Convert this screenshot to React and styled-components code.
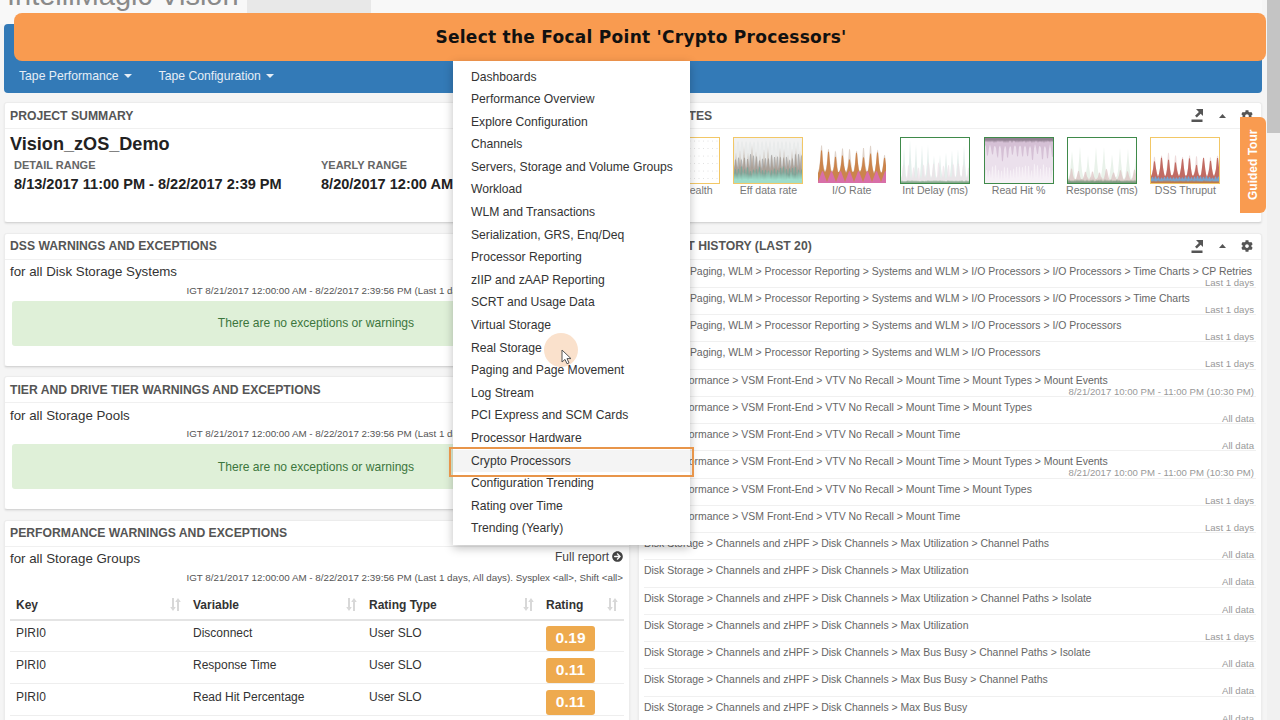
import styled, { createGlobalStyle } from "styled-components";
import { FaCog, FaArrowCircleRight } from "react-icons/fa";

const GlobalStyle = createGlobalStyle`
  html, body {
    margin: 0;
    height: 100%;
    overflow: hidden;
    background: #f5f5f5;
    font-family: "Liberation Sans", Arial, sans-serif;
  }
  * { box-sizing: border-box; }
`;

const Screen = styled.div`
  position: relative;
  width: 1280px;
  height: 720px;
  overflow: hidden;
  display: flex;
`;

const Page = styled.div`
  width: 1267px;
  height: 720px;
  overflow: hidden;
  padding-right: 5px;
`;

const Scrollbar = styled.div`
  width: 13px;
  height: 720px;
  background: #f1f1f1;
`;

const ScrollThumb = styled.div`
  height: 133px;
  background: #c4c4c4;
`;

const Header = styled.header`
  height: 24px;
  overflow: hidden;
  display: flex;
  background: #f8f8f8;
`;

const Brand = styled.div`
  width: 247px;
  padding-left: 7px;
  margin-top: -21px;
  font-size: 29px;
  line-height: 32px;
  color: #8a8a8a;
  white-space: nowrap;
`;

const HeaderTab = styled.div`
  width: 124px;
  height: 13px;
  background: #e8e8e8;
`;

const NavBar = styled.nav`
  height: 69px;
  margin-left: 4px;
  padding: 0 0 8px 15px;
  background: #337ab7;
  border-radius: 4px;
  display: flex;
  align-items: flex-end;
  gap: 27px;
`;

const NavItem = styled.span`
  font-size: 12.2px;
  line-height: 18px;
  color: #e6eef6;
  display: flex;
  align-items: center;
  gap: 5px;
  &::after {
    content: "";
    border-top: 4px solid #e6eef6;
    border-left: 4px solid transparent;
    border-right: 4px solid transparent;
  }
`;

const Columns = styled.div`
  display: grid;
  grid-template-columns: 626px 624px;
  gap: 8px;
  margin: 9px 0 0 4px;
`;

const Column = styled.div`
  display: flex;
  flex-direction: column;
  gap: 9.5px;
`;

const Panel = styled.section`
  height: ${(p) => p.$height}px;
  flex: none;
  background: #fff;
  border: 1px solid #ececec;
  border-bottom: 1px solid #d6d6d6;
  border-radius: 3px;
  box-shadow: 0 1px 2px rgba(0, 0, 0, 0.08);
  overflow: hidden;
`;

const PanelHead = styled.div`
  height: 26px;
  padding: 0 6px 0 5px;
  border-bottom: 1px solid #f0f0f0;
  display: flex;
  align-items: center;
  justify-content: space-between;
  color: #555;
`;

const PanelTitle = styled.h3`
  margin: 0;
  font-size: 12.2px;
  font-weight: 700;
  color: #555;
  white-space: nowrap;
`;

const HeadIcons = styled.div`
  display: flex;
  align-items: center;
  gap: 15px;
  padding-right: 2px;
  color: #555;
  svg { display: block; }
`;

const ProjectName = styled.div`
  margin: 5px 0 0 5px;
  font-size: 18.1px;
  line-height: 20px;
  font-weight: 700;
  color: #222;
`;

const RangeRow = styled.div`
  display: flex;
  margin: 4px 0 0 9px;
`;

const RangeBlock = styled.div`
  width: 307px;
  flex: none;
  white-space: nowrap;
`;

const RangeLabel = styled.div`
  font-size: 11px;
  line-height: 14px;
  font-weight: 700;
  color: #666;
`;

const RangeValue = styled.div`
  margin-top: 3px;
  font-size: 14.55px;
  line-height: 18px;
  font-weight: 700;
  color: #222;
`;

const SubHead = styled.div`
  display: flex;
  justify-content: space-between;
  align-items: center;
  padding: 2px 6px 0 5px;
  height: 22px;
`;

const ForAll = styled.span`
  font-size: 13.3px;
  color: #333;
`;

const FullReport = styled.span`
  display: flex;
  align-items: center;
  gap: 3px;
  margin-bottom: 4px;
  font-size: 12px;
  color: #444;
`;

const Scope = styled.div`
  margin-top: 2px;
  padding-right: 6px;
  text-align: right;
  font-size: 9.8px;
  line-height: 14px;
  color: #555;
  white-space: nowrap;
`;

const Alert = styled.div`
  height: 45px;
  margin: 3px 9px 0 7px;
  border-radius: 3px;
  background: #dff0d8;
  color: #3c763d;
  font-size: 12.1px;
  display: flex;
  align-items: center;
  justify-content: center;
`;

const Table = styled.table`
  width: 614px;
  margin: 6px 0 0 5px;
  border-collapse: collapse;
  table-layout: fixed;
  font-size: 12px;
  color: #333;
`;

const Th = styled.th`
  width: ${(p) => p.$width}px;
  height: 29px;
  padding: 0 6px;
  text-align: left;
  font-weight: 700;
  border-bottom: 2px solid #e4e4e4;
`;

const ThInner = styled.div`
  display: flex;
  justify-content: space-between;
  align-items: center;
`;

const Td = styled.td`
  height: 32px;
  padding: 0 6px 6px;
  border-bottom: 1px solid #eee;
  vertical-align: middle;
`;

const RatingTd = styled(Td)`
  padding: 5px 6px 0;
`;

const Rating = styled.div`
  width: 49px;
  height: 25px;
  border-radius: 3px;
  background: #eeaa4e;
  color: #fff;
  font-size: 15.5px;
  font-weight: 700;
  display: flex;
  align-items: center;
  justify-content: center;
`;

const ThumbRow = styled.div`
  display: flex;
  gap: 13.4px;
  padding: 8px 0 0 11px;
`;

const Thumb = styled.figure`
  width: 70px;
  margin: 0;
  flex: none;
`;

const ThumbFrame = styled.div`
  width: 70px;
  height: 47px;
  border: 1px solid ${(p) => p.$border};
  overflow: hidden;
  svg { display: block; width: 100%; height: 100%; }
`;

const ThumbLabel = styled.figcaption`
  margin: 0 -10px;
  text-align: center;
  font-size: 10.6px;
  line-height: 12px;
  color: #777;
  white-space: nowrap;
`;

const HistoryList = styled.div`
  padding-top: 1px;
`;

const HistoryRow = styled.div`
  height: 27.27px;
  margin: 0 5px 0 5px;
  padding-top: 4px;
  border-bottom: 1px solid #f0f0f0;
`;

const HistoryPath = styled.div`
  font-size: 10.46px;
  line-height: 13px;
  color: #666;
  white-space: nowrap;
`;

const HistoryWhen = styled.div`
  margin-top: -1px;
  padding-right: 2px;
  text-align: right;
  font-size: 9.6px;
  line-height: 11px;
  color: #999;
  white-space: nowrap;
`;

const Banner = styled.div`
  position: absolute;
  left: 14px;
  top: 13px;
  width: 1252px;
  height: 48px;
  padding-left: 2px;
  border-radius: 8px;
  background: #f99b50;
  color: #111;
  font-family: "DejaVu Sans", sans-serif;
  font-size: 17px;
  font-weight: 700;
  display: flex;
  align-items: center;
  justify-content: center;
  letter-spacing: 0.27px;
`;

const Dropdown = styled.ul`
  position: absolute;
  left: 453px;
  top: 61px;
  width: 237px;
  height: 484px;
  margin: 0;
  padding: 4.5px 0 0;
  list-style: none;
  background: #fff;
  box-shadow: 0 3px 9px rgba(0, 0, 0, 0.25);
`;

const DropdownItem = styled.li`
  height: 22.6px;
  padding-left: 18px;
  font-size: 12.15px;
  line-height: 22.6px;
  color: #333;
  white-space: nowrap;
  background: ${(p) => (p.$active ? "#f4f4f4" : "transparent")};
`;

const Spotlight = styled.div`
  position: absolute;
  left: 449px;
  top: 447px;
  width: 245px;
  height: 30px;
  border: 2px solid #e8954a;
`;

const CursorHalo = styled.div`
  position: absolute;
  left: 544px;
  top: 333px;
  width: 34px;
  height: 34px;
  border-radius: 50%;
  background: rgba(247, 205, 170, 0.6);
`;

const CursorIcon = styled.svg`
  position: absolute;
  left: 561px;
  top: 349px;
`;

const GuidedTour = styled.div`
  position: absolute;
  left: 1240px;
  top: 117px;
  width: 26px;
  height: 96px;
  border-radius: 6px 0 0 6px;
  background: #f99b50;
  color: #fff;
  font-size: 12px;
  font-weight: 700;
  writing-mode: vertical-rl;
  transform: rotate(180deg);
  display: flex;
  align-items: center;
  justify-content: center;
`;

const dropdownItems = [
  "Dashboards",
  "Performance Overview",
  "Explore Configuration",
  "Channels",
  "Servers, Storage and Volume Groups",
  "Workload",
  "WLM and Transactions",
  "Serialization, GRS, Enq/Deq",
  "Processor Reporting",
  "zIIP and zAAP Reporting",
  "SCRT and Usage Data",
  "Virtual Storage",
  "Real Storage",
  "Paging and Page Movement",
  "Log Stream",
  "PCI Express and SCM Cards",
  "Processor Hardware",
  "Crypto Processors",
  "Configuration Trending",
  "Rating over Time",
  "Trending (Yearly)",
];

const wlm = "Systems, Paging, WLM > Processor Reporting > Systems and WLM > I/O Processors";
const vsm = "Tape Performance > VSM Front-End > VTV No Recall > Mount Time";
const disk = "Disk Storage > Channels and zHPF > Disk Channels";
const mountRange = "8/21/2017 10:00 PM - 11:00 PM (10:30 PM)";

const history = [
  [`${wlm} > I/O Processors > Time Charts > CP Retries`, "Last 1 days"],
  [`${wlm} > I/O Processors > Time Charts`, "Last 1 days"],
  [`${wlm} > I/O Processors`, "Last 1 days"],
  [wlm, "Last 1 days"],
  [`${vsm} > Mount Types > Mount Events`, mountRange],
  [`${vsm} > Mount Types`, "All data"],
  [vsm, "All data"],
  [`${vsm} > Mount Types > Mount Events`, mountRange],
  [`${vsm} > Mount Types`, "Last 1 days"],
  [vsm, "Last 1 days"],
  [`${disk} > Max Utilization > Channel Paths`, "All data"],
  [`${disk} > Max Utilization`, "All data"],
  [`${disk} > Max Utilization > Channel Paths > Isolate`, "All data"],
  [`${disk} > Max Utilization`, "Last 1 days"],
  [`${disk} > Max Bus Busy > Channel Paths > Isolate`, "All data"],
  [`${disk} > Max Bus Busy > Channel Paths`, "All data"],
  [`${disk} > Max Bus Busy`, "All data"],
];

const ratings = [
  ["PIRI0", "Disconnect", "User SLO", "0.19"],
  ["PIRI0", "Response Time", "User SLO", "0.11"],
  ["PIRI0", "Read Hit Percentage", "User SLO", "0.11"],
];

const scope = "IGT 8/21/2017 12:00:00 AM - 8/22/2017 2:39:56 PM (Last 1 days, All days). Sysplex <all>, Shift <all>";

const GREEN = "#3f8a4a";
const YELLOW = "#f2c766";

// base and amp are in chart px, period gives the spacing of the big spikes
const thumbs = [
  { label: "DSS Health", border: YELLOW, dots: true, layers: [] },
  {
    label: "Eff data rate",
    border: YELLOW,
    bg: "#e9ebeb",
    layers: [
      { color: "#8a8a8a", opacity: 0.6, base: 14, amp: 30, period: 3 },
      { color: "#a58c78", opacity: 0.45, base: 12, amp: 26, period: 4 },
      { color: "#5fa89a", opacity: 0.6, base: 6, amp: 22, period: 3 },
      { color: "#a5e6d2", opacity: 0.85, base: 3, amp: 9, period: 2 },
      { color: "#f4f4f4", opacity: 0.7, base: 2, amp: 16, period: 4, hang: true },
    ],
  },
  {
    label: "I/O Rate",
    border: "transparent",
    layers: [
      { color: "#c9b6a6", opacity: 0.6, base: 10, amp: 36, period: 7 },
      { color: "#c97f45", opacity: 0.95, base: 9, amp: 30, period: 7 },
      { color: "#d86fa8", opacity: 1, base: 1, amp: 12, period: 9, smooth: true },
    ],
  },
  {
    label: "Int Delay (ms)",
    border: GREEN,
    layers: [
      { color: "#d5e6e2", opacity: 0.65, base: 3, amp: 40, period: 6 },
      { color: "#ecdfe6", opacity: 0.65, base: 3, amp: 28, period: 5 },
      { color: "#6f9a78", opacity: 0.8, base: 1, amp: 2, period: 2 },
    ],
  },
  {
    label: "Read Hit %",
    border: GREEN,
    bg: "#ebe0ec",
    layers: [
      { color: "#f8f2f8", opacity: 0.85, base: 3, amp: 32, period: 3 },
      { color: "#c2a6c2", opacity: 0.55, base: 6, amp: 26, period: 5, hang: true },
      { color: "#8a7a8a", opacity: 0.9, base: 2, amp: 3, period: 2, hang: true },
    ],
  },
  {
    label: "Response (ms)",
    border: GREEN,
    layers: [
      { color: "#e2eee3", opacity: 0.75, base: 3, amp: 32, period: 8 },
      { color: "#dcc0c0", opacity: 0.7, base: 3, amp: 15, period: 7 },
      { color: "#6c8f72", opacity: 0.85, base: 1, amp: 3, period: 2 },
    ],
  },
  {
    label: "DSS Thruput",
    border: YELLOW,
    layers: [
      { color: "#ead2d2", opacity: 0.8, base: 5, amp: 36, period: 7 },
      { color: "#b8574e", opacity: 0.85, base: 6, amp: 26, period: 7 },
      { color: "#6fa8d8", opacity: 0.95, base: 3, amp: 8, period: 3 },
      { color: "#c8763c", opacity: 0.9, base: 1, amp: 2, period: 2 },
    ],
  },
];

const seededRandom = (seed) => () => {
  seed = (seed * 16807) % 2147483647;
  return seed / 2147483647;
};

const layerPoints = (layer, seed, w, h) => {
  const rnd = seededRandom(seed * 7919 + 13);
  const pts = [];
  let height = 0.6;
  for (let x = 0; x <= w; x += 1) {
    const phase = x % layer.period;
    if (phase === 0) height = 0.55 + rnd() * 0.45;
    // distance to the middle of the period, 0 at the tip and 1 at the edges
    const d = Math.abs(phase / layer.period - 0.5) * 2;
    const peak = layer.smooth ? 1 - d : height * (1 - d) * (1 - d) + rnd() * 0.08;
    const v = layer.base + layer.amp * peak;
    pts.push(`${x},${(layer.hang ? v : h - v).toFixed(1)}`);
  }
  const edge = layer.hang ? 0 : h;
  return `0,${edge} ${pts.join(" ")} ${w},${edge}`;
};

const Spark = ({ item, index }) => {
  const w = 68;
  const h = 45;
  return (
    <svg viewBox={`0 0 ${w} ${h}`} preserveAspectRatio="none">
      {item.bg && <rect width={w} height={h} fill={item.bg} />}
      {item.dots &&
        Array.from({ length: 90 }, (_, i) => (
          <circle key={i} cx={3 + (i % 15) * 4.5} cy={3 + Math.floor(i / 15) * 7.5} r="0.5" fill="#d8d8d8" />
        ))}
      {item.layers.map((layer, i) => (
        <polygon key={i} points={layerPoints(layer, index * 10 + i + 1, w, h)} fill={layer.color} opacity={layer.opacity} />
      ))}
    </svg>
  );
};

const ExportIcon = () => (
  <svg width="13" height="13" viewBox="0 0 13 13" fill="currentColor">
    <rect x="0.5" y="10.5" width="11" height="2.5" />
    <path d="M5 0h7v7l-2.3-2.3L5.8 8.6 4 6.8l3.9-3.9z" />
  </svg>
);

const CaretUp = () => (
  <svg width="7" height="4" viewBox="0 0 7 4" fill="currentColor">
    <path d="M3.5 0 7 4H0z" />
  </svg>
);

const SortIcon = () => (
  <svg width="11" height="13" viewBox="0 0 11 13" fill="#d8d8d8">
    <path d="M2 0h2v9h1.8L3 13 .2 9H2zM7 13h2V4h1.8L8 0 5.2 4H7z" />
  </svg>
);

const PanelIcons = () => (
  <HeadIcons>
    <ExportIcon />
    <CaretUp />
    <FaCog size={12} />
  </HeadIcons>
);

const WarningPanel = ({ title, subject }) => (
  <Panel $height={134}>
    <PanelHead>
      <PanelTitle>{title}</PanelTitle>
    </PanelHead>
    <SubHead>
      <ForAll>{subject}</ForAll>
    </SubHead>
    <Scope>{scope}</Scope>
    <Alert>There are no exceptions or warnings</Alert>
  </Panel>
);

export default function App() {
  return (
    <>
      <GlobalStyle />
      <Screen>
        <Page>
          <Header>
            <Brand>IntelliMagic Vision</Brand>
            <HeaderTab />
          </Header>
          <NavBar>
            <NavItem>Tape Performance</NavItem>
            <NavItem>Tape Configuration</NavItem>
          </NavBar>
          <Columns>
            <Column>
              <Panel $height={121}>
                <PanelHead>
                  <PanelTitle>PROJECT SUMMARY</PanelTitle>
                </PanelHead>
                <ProjectName>Vision_zOS_Demo</ProjectName>
                <RangeRow>
                  <RangeBlock>
                    <RangeLabel>DETAIL RANGE</RangeLabel>
                    <RangeValue>8/13/2017 11:00 PM - 8/22/2017 2:39 PM</RangeValue>
                  </RangeBlock>
                  <RangeBlock>
                    <RangeLabel>YEARLY RANGE</RangeLabel>
                    <RangeValue>8/20/2017 12:00 AM</RangeValue>
                  </RangeBlock>
                </RangeRow>
              </Panel>
              <WarningPanel title="DSS WARNINGS AND EXCEPTIONS" subject="for all Disk Storage Systems" />
              <WarningPanel title="TIER AND DRIVE TIER WARNINGS AND EXCEPTIONS" subject="for all Storage Pools" />
              <Panel $height={220}>
                <PanelHead>
                  <PanelTitle>PERFORMANCE WARNINGS AND EXCEPTIONS</PanelTitle>
                </PanelHead>
                <SubHead>
                  <ForAll>for all Storage Groups</ForAll>
                  <FullReport>
                    Full report <FaArrowCircleRight size={11} />
                  </FullReport>
                </SubHead>
                <Scope>{scope}</Scope>
                <Table>
                  <thead>
                    <tr>
                      <Th $width={177}><ThInner>Key<SortIcon /></ThInner></Th>
                      <Th $width={176}><ThInner>Variable<SortIcon /></ThInner></Th>
                      <Th $width={177}><ThInner>Rating Type<SortIcon /></ThInner></Th>
                      <Th $width={84}><ThInner>Rating<SortIcon /></ThInner></Th>
                    </tr>
                  </thead>
                  <tbody>
                    {ratings.map(([key, variable, type, value]) => (
                      <tr key={variable}>
                        <Td>{key}</Td>
                        <Td>{variable}</Td>
                        <Td>{type}</Td>
                        <RatingTd><Rating>{value}</Rating></RatingTd>
                      </tr>
                    ))}
                  </tbody>
                </Table>
              </Panel>
            </Column>
            <Column>
              <Panel $height={121}>
                <PanelHead>
                  <PanelTitle>FAVORITES</PanelTitle>
                  <PanelIcons />
                </PanelHead>
                <ThumbRow>
                  {thumbs.map((item, i) => (
                    <Thumb key={item.label}>
                      <ThumbFrame $border={item.border}>
                        <Spark item={item} index={i + 1} />
                      </ThumbFrame>
                      <ThumbLabel>{item.label}</ThumbLabel>
                    </Thumb>
                  ))}
                </ThumbRow>
              </Panel>
              <Panel $height={500}>
                <PanelHead>
                  <PanelTitle>REPORT HISTORY (LAST 20)</PanelTitle>
                  <PanelIcons />
                </PanelHead>
                <HistoryList>
                  {history.map(([path, when], i) => (
                    <HistoryRow key={i}>
                      <HistoryPath>{path}</HistoryPath>
                      <HistoryWhen>{when}</HistoryWhen>
                    </HistoryRow>
                  ))}
                </HistoryList>
              </Panel>
            </Column>
          </Columns>
        </Page>
        <Scrollbar>
          <ScrollThumb />
        </Scrollbar>
        <Banner>Select the Focal Point 'Crypto Processors'</Banner>
        <Dropdown>
          {dropdownItems.map((item) => (
            <DropdownItem key={item} $active={item === "Crypto Processors"}>
              {item}
            </DropdownItem>
          ))}
        </Dropdown>
        <Spotlight />
        <CursorHalo />
        <CursorIcon width="11" height="16" viewBox="0 0 11 16">
          <path d="M1 1v12l3-2.6 2 4.4 2-.9-2-4.3h4z" fill="#fff" stroke="#555" strokeWidth="1" />
        </CursorIcon>
        <GuidedTour>Guided Tour</GuidedTour>
      </Screen>
    </>
  );
}
